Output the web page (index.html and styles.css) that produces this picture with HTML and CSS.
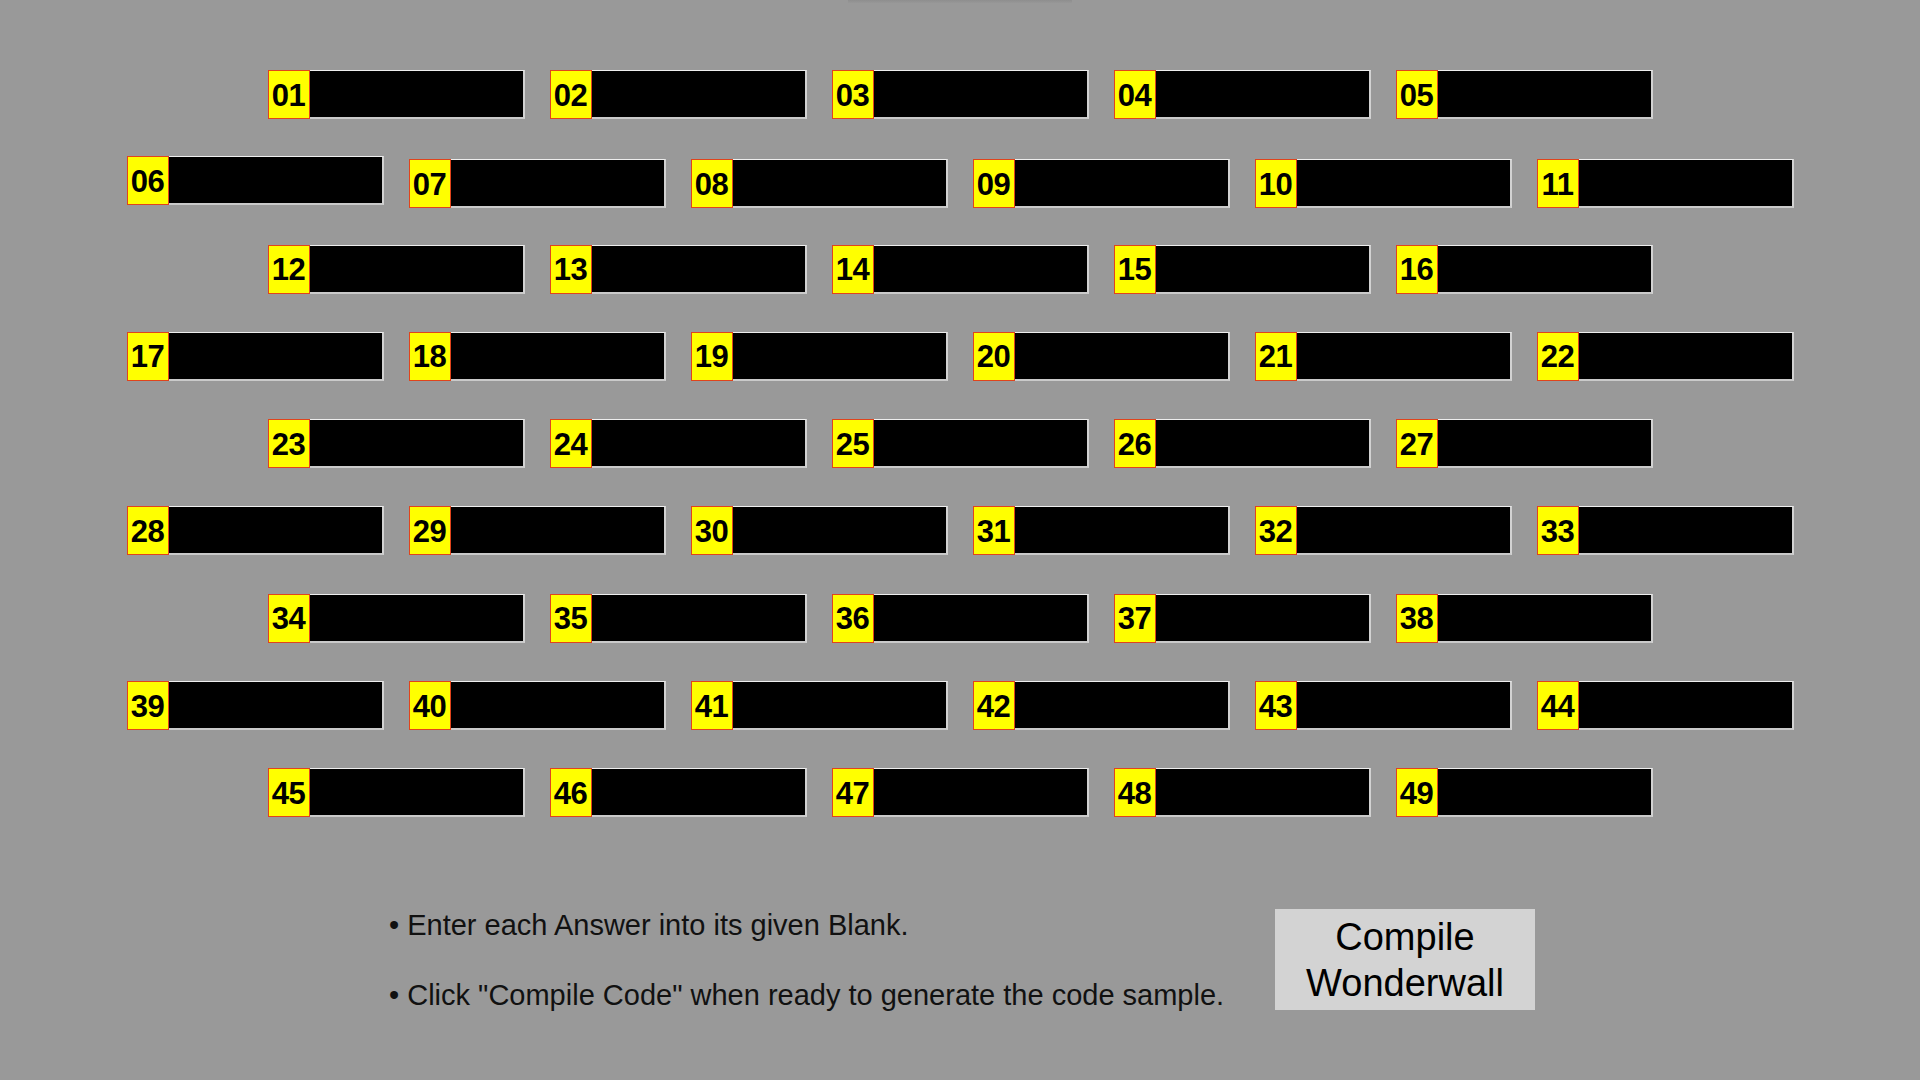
FILE: index.html
```html
<!DOCTYPE html>
<html lang="en">
<head>
<meta charset="utf-8">
<title>Wonderwall</title>
<link rel="stylesheet" href="styles.css">
</head>
<body>
<div class="page">
  <div class="topbar"></div>
  <div class="wall">
    <div class="row">
      <div class="blank"><span class="num">01</span><input class="field" type="text"></div>
      <div class="blank"><span class="num">02</span><input class="field" type="text"></div>
      <div class="blank"><span class="num">03</span><input class="field" type="text"></div>
      <div class="blank"><span class="num">04</span><input class="field" type="text"></div>
      <div class="blank"><span class="num">05</span><input class="field" type="text"></div>
    </div>
    <div class="row shift">
      <div class="blank raised"><span class="num">06</span><input class="field" type="text"></div>
      <div class="blank"><span class="num">07</span><input class="field" type="text"></div>
      <div class="blank"><span class="num">08</span><input class="field" type="text"></div>
      <div class="blank"><span class="num">09</span><input class="field" type="text"></div>
      <div class="blank"><span class="num">10</span><input class="field" type="text"></div>
      <div class="blank"><span class="num">11</span><input class="field" type="text"></div>
    </div>
    <div class="row">
      <div class="blank"><span class="num">12</span><input class="field" type="text"></div>
      <div class="blank"><span class="num">13</span><input class="field" type="text"></div>
      <div class="blank"><span class="num">14</span><input class="field" type="text"></div>
      <div class="blank"><span class="num">15</span><input class="field" type="text"></div>
      <div class="blank"><span class="num">16</span><input class="field" type="text"></div>
    </div>
    <div class="row">
      <div class="blank"><span class="num">17</span><input class="field" type="text"></div>
      <div class="blank"><span class="num">18</span><input class="field" type="text"></div>
      <div class="blank"><span class="num">19</span><input class="field" type="text"></div>
      <div class="blank"><span class="num">20</span><input class="field" type="text"></div>
      <div class="blank"><span class="num">21</span><input class="field" type="text"></div>
      <div class="blank"><span class="num">22</span><input class="field" type="text"></div>
    </div>
    <div class="row">
      <div class="blank"><span class="num">23</span><input class="field" type="text"></div>
      <div class="blank"><span class="num">24</span><input class="field" type="text"></div>
      <div class="blank"><span class="num">25</span><input class="field" type="text"></div>
      <div class="blank"><span class="num">26</span><input class="field" type="text"></div>
      <div class="blank"><span class="num">27</span><input class="field" type="text"></div>
    </div>
    <div class="row">
      <div class="blank"><span class="num">28</span><input class="field" type="text"></div>
      <div class="blank"><span class="num">29</span><input class="field" type="text"></div>
      <div class="blank"><span class="num">30</span><input class="field" type="text"></div>
      <div class="blank"><span class="num">31</span><input class="field" type="text"></div>
      <div class="blank"><span class="num">32</span><input class="field" type="text"></div>
      <div class="blank"><span class="num">33</span><input class="field" type="text"></div>
    </div>
    <div class="row">
      <div class="blank"><span class="num">34</span><input class="field" type="text"></div>
      <div class="blank"><span class="num">35</span><input class="field" type="text"></div>
      <div class="blank"><span class="num">36</span><input class="field" type="text"></div>
      <div class="blank"><span class="num">37</span><input class="field" type="text"></div>
      <div class="blank"><span class="num">38</span><input class="field" type="text"></div>
    </div>
    <div class="row">
      <div class="blank"><span class="num">39</span><input class="field" type="text"></div>
      <div class="blank"><span class="num">40</span><input class="field" type="text"></div>
      <div class="blank"><span class="num">41</span><input class="field" type="text"></div>
      <div class="blank"><span class="num">42</span><input class="field" type="text"></div>
      <div class="blank"><span class="num">43</span><input class="field" type="text"></div>
      <div class="blank"><span class="num">44</span><input class="field" type="text"></div>
    </div>
    <div class="row">
      <div class="blank"><span class="num">45</span><input class="field" type="text"></div>
      <div class="blank"><span class="num">46</span><input class="field" type="text"></div>
      <div class="blank"><span class="num">47</span><input class="field" type="text"></div>
      <div class="blank"><span class="num">48</span><input class="field" type="text"></div>
      <div class="blank"><span class="num">49</span><input class="field" type="text"></div>
    </div>
  </div>
  <div class="footer">
    <div class="instructions">
      <p>• Enter each Answer into its given Blank.</p>
      <p>• Click "Compile Code" when ready to generate the code sample.</p>
    </div>
    <button class="compile" type="button">Compile<br>Wonderwall</button>
  </div>
</div>
</body>
</html>
```

FILE: styles.css
```css
html, body {
  margin: 0;
  padding: 0;
  background: #999999;
}

body {
  font-family: "Liberation Sans", Arial, sans-serif;
}

.page {
  width: 1920px;
  height: 1080px;
  overflow: hidden;
}

.topbar {
  width: 224px;
  height: 3px;
  margin: 0 auto;
  background: linear-gradient(#8e8e8e, #979797);
}

.wall {
  display: flex;
  flex-direction: column;
  align-items: center;
  gap: 38.3px;
  margin-top: 67px;
}

.row {
  display: flex;
  align-items: flex-start;
  gap: 25px;
  height: 49px;
}

.row.shift {
  margin-top: 2px;
  margin-bottom: -2px;
}

.blank {
  display: flex;
  width: 257px;
  height: 49px;
}

.blank.raised {
  margin-top: -3px;
}

.num {
  box-sizing: border-box;
  width: 42px;
  height: 49px;
  flex: none;
  padding-top: 2px;
  background: #ffff00;
  border: 1px solid #e0441c;
  display: flex;
  align-items: center;
  justify-content: center;
  font-weight: bold;
  font-size: 31px;
  color: #000;
  letter-spacing: -0.5px;
}

.field {
  box-sizing: border-box;
  flex: 1;
  min-width: 0;
  height: 49px;
  margin: 0;
  padding: 0 6px;
  background: #000;
  color: #fff;
  font-family: "Liberation Sans", Arial, sans-serif;
  font-size: 20px;
  border-top: 1px solid #eeeeee;
  border-right: 2px solid #d2d2d2;
  border-bottom: 2px solid #cacaca;
  border-left: 0;
  outline: none;
}

.footer {
  display: flex;
  align-items: flex-start;
  padding-left: 389px;
  margin-top: 92px;
}

.instructions {
  width: 886px;
  font-size: 29px;
  line-height: 32px;
  color: #111;
}

.instructions p {
  margin: 0 0 38px;
}

.compile {
  box-sizing: border-box;
  width: 260px;
  height: 101px;
  margin: 0;
  padding: 0;
  border: 0;
  background: #d3d3d3;
  color: #000;
  font-family: "Liberation Sans", Arial, sans-serif;
  font-size: 38px;
  line-height: 46px;
  text-align: center;
}
```
